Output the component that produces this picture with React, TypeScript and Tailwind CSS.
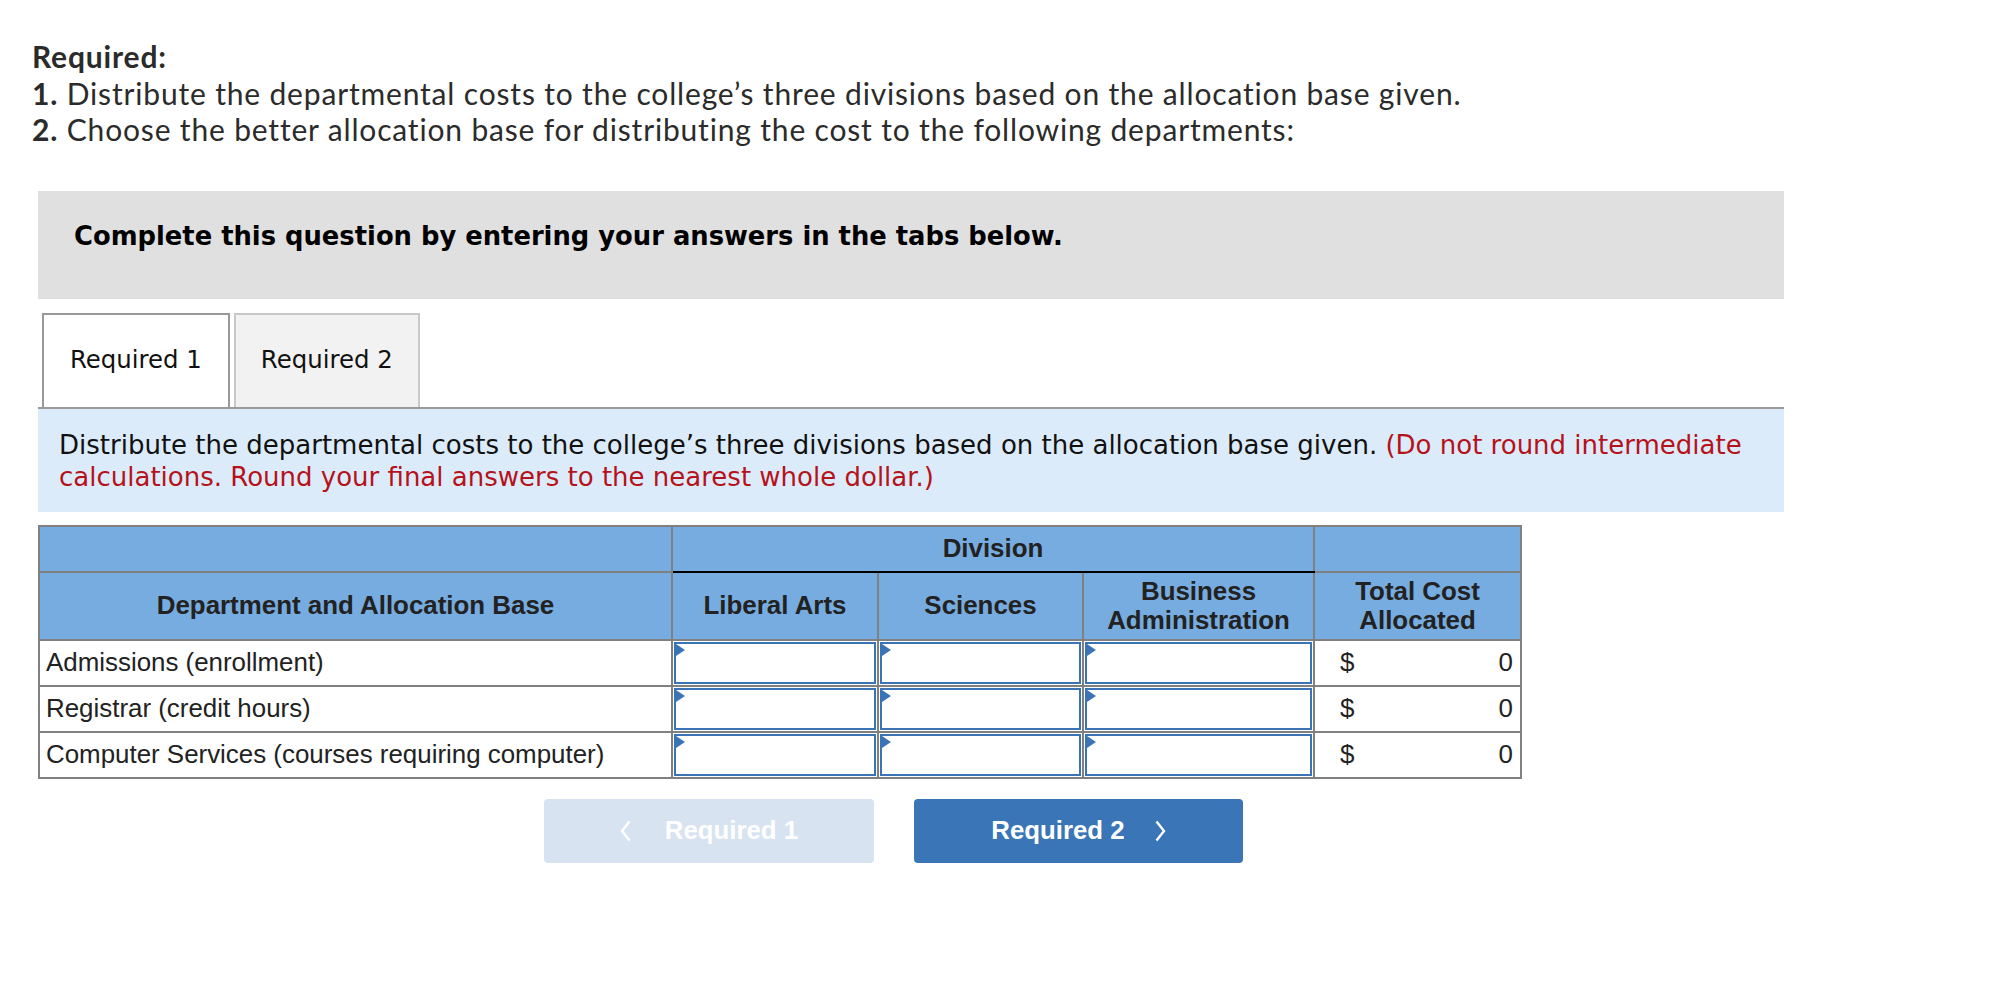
import React from "react";

const departments = [
  "Admissions (enrollment)",
  "Registrar (credit hours)",
  "Computer Services (courses requiring computer)",
];

function Flag() {
  return (
    <svg className="absolute left-0 top-0" width="9" height="12" viewBox="0 0 9 12">
      <path d="M0 0 L9 6 L0 12 Z" fill="#3b74b6" />
    </svg>
  );
}

function InputCell() {
  return (
    <td className="border-2 border-[#808080] p-[1px]">
      <div className="relative h-[42px] border-2 border-[#3b74b6] bg-white">
        <Flag />
      </div>
    </td>
  );
}

function Chevron({ dir }: { dir: "left" | "right" }) {
  return (
    <svg width="11" height="22" viewBox="0 0 11 22">
      <polyline
        points={dir === "left" ? "9.5,1.5 2,11 9.5,20.5" : "1.5,1.5 9,11 1.5,20.5"}
        fill="none"
        stroke="white"
        strokeWidth="2.4"
      />
    </svg>
  );
}

export default function App() {
  return (
    <div className="min-h-screen bg-white pb-10">
      <div className="pl-[32px] pt-[38px] font-['Lato',sans-serif] text-[30px] leading-[36.5px] tracking-[0.83px] text-[#2b2b2b]">
        <div className="font-bold">Required:</div>
        <div>
          <span className="font-bold">1.</span> Distribute the departmental costs to the college’s three divisions based on the allocation base given.
        </div>
        <div>
          <span className="font-bold">2.</span> Choose the better allocation base for distributing the cost to the following departments:
        </div>
      </div>

      <div className="pl-[38px]">
        <div className="mt-[43px] h-[108px] w-[1746px] bg-[#e0e0e0] pl-[36px] pt-[29px] font-['DejaVu_Sans',sans-serif] text-[25.8px] font-bold leading-[32px] text-black">
          Complete this question by entering your answers in the tabs below.
        </div>

        <div className="mt-[14px] flex w-[1746px] items-end gap-[4px] border-b-2 border-[#999999] pl-[4px] font-['DejaVu_Sans',sans-serif] text-[24.4px] text-[#111]">
          <div className="flex h-[94px] items-center border-2 border-b-0 border-[#999999] bg-white px-[26px]">
            Required 1
          </div>
          <div className="flex h-[94px] items-center border-2 border-b-0 border-[#c8c8c8] bg-[#f2f2f2] px-[25px]">
            Required 2
          </div>
        </div>

        <div className="w-[1746px] bg-[#dcebf9] pb-[19px] pl-[21px] pt-[20px] font-['DejaVu_Sans',sans-serif] text-[26px] leading-[32px] text-[#111]">
          Distribute the departmental costs to the college’s three divisions based on the allocation base given.{" "}
          <span className="text-[#b5121b]">
            (Do not round intermediate
            <br />
            calculations. Round your final answers to the nearest whole dollar.)
          </span>
        </div>

        <table className="mt-[13px] w-[1482px] table-fixed border-collapse font-['Liberation_Sans',Arial,sans-serif] text-[25.9px] text-[#222]">
          <colgroup>
            <col className="w-[633px]" />
            <col className="w-[206px]" />
            <col className="w-[205px]" />
            <col className="w-[231px]" />
            <col className="w-[207px]" />
          </colgroup>
          <thead>
            <tr className="bg-[#77ace1]">
              <th className="border-2 border-[#808080] p-0">
                <div className="h-[44px]" />
              </th>
              <th colSpan={3} className="border-2 border-[#808080] border-b-black p-0">
                <div className="flex h-[44px] items-center justify-center font-bold">Division</div>
              </th>
              <th className="border-2 border-[#808080] p-0">
                <div className="h-[44px]" />
              </th>
            </tr>
            <tr className="bg-[#77ace1] font-bold">
              <th className="border-2 border-[#808080] p-0">
                <div className="flex h-[66px] items-center justify-center">Department and Allocation Base</div>
              </th>
              <th className="border-2 border-[#808080] border-t-black p-0">
                <div className="flex h-[66px] items-center justify-center">Liberal Arts</div>
              </th>
              <th className="border-2 border-[#808080] border-t-black p-0">
                <div className="flex h-[66px] items-center justify-center">Sciences</div>
              </th>
              <th className="border-2 border-[#808080] border-t-black p-0">
                <div className="flex h-[66px] flex-col items-center justify-center leading-[29px]">
                  <span>Business</span>
                  <span>Administration</span>
                </div>
              </th>
              <th className="border-2 border-[#808080] p-0">
                <div className="flex h-[66px] flex-col items-center justify-center leading-[29px]">
                  <span>Total Cost</span>
                  <span>Allocated</span>
                </div>
              </th>
            </tr>
          </thead>
          <tbody>
            {departments.map((name) => (
              <tr key={name}>
                <td className="border-2 border-[#808080] p-0">
                  <div className="flex h-[44px] items-center whitespace-nowrap pl-[6px]">{name}</div>
                </td>
                <InputCell />
                <InputCell />
                <InputCell />
                <td className="border-2 border-[#808080] p-0">
                  <div className="flex h-[44px] items-center justify-between pl-[25px] pr-[7px]">
                    <span>$</span>
                    <span>0</span>
                  </div>
                </td>
              </tr>
            ))}
          </tbody>
        </table>

        <div className="mt-[20px] flex gap-[40px] pl-[506px] font-['Liberation_Sans',Arial,sans-serif] text-[25.8px] font-bold text-white">
          <button className="flex h-[64px] w-[330px] items-center justify-center gap-[34px] rounded-[4px] bg-[#d7e3f1]">
            <Chevron dir="left" />
            <span>Required 1</span>
          </button>
          <button className="flex h-[64px] w-[329px] items-center justify-center gap-[30px] rounded-[4px] bg-[#3975b7]">
            <span>Required 2</span>
            <Chevron dir="right" />
          </button>
        </div>
      </div>
    </div>
  );
}
